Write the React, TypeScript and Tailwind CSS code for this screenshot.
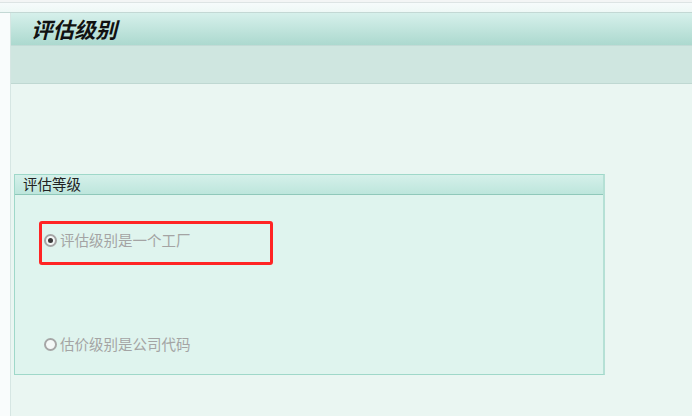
const cjk = { fontFamily: '"Noto Sans CJK SC", "Noto Sans", sans-serif' };

function Radio({ checked, label }: { checked: boolean; label: string }) {
  return (
    <div className="flex items-center h-[20px]">
      <span className="w-[13px] h-[13px] rounded-full border-2 border-[#a6a6a6] bg-[#f4f8f7] flex items-center justify-center">
        {checked && <span className="w-[5px] h-[5px] rounded-full bg-[#3a3a3a]" />}
      </span>
      <span className="ml-[3px] text-[14.5px] text-[#a4a4a4] leading-none">{label}</span>
    </div>
  );
}

export default function App() {
  return (
    <div className="w-[692px] h-[416px] flex flex-col bg-[#f8fbfb] overflow-hidden" style={cjk}>
      {/* top strip */}
      <div className="h-[2px] bg-[#f3f5f5]" />
      <div className="h-[11px] border-t border-[#dde4e4] border-b border-b-[#c3d8d4] bg-gradient-to-b from-[#f6fbfb] to-[#eef8f6]" />

      <div className="flex flex-1">
        <div className="w-[11px] border-r border-[#d6e6e3] bg-[#f9fcfc]" />

        <div className="flex-1 flex flex-col">
          {/* title bar */}
          <div className="h-[33px] flex items-center bg-gradient-to-b from-[#d6f0eb] to-[#acd9cf] border-b border-[#c2dbd6]">
            <h1 className="ml-[20px] text-[21.5px] font-bold italic text-[#111] leading-none">评估级别</h1>
          </div>
          {/* toolbar */}
          <div className="h-[38px] bg-[#cfe6e0] border-b border-[#bfd8d2]" />

          {/* content */}
          <div className="flex-1 bg-[#eaf6f2] pl-[3px] pt-[90px]">
            <div className="relative w-[591px] h-[201px] border border-[#9fd8c9] border-r-2 border-r-[#b5e0d5] bg-[#dff4ee] flex flex-col">
              <div className="h-[20px] flex items-center pl-[8px] bg-gradient-to-b from-[#d5f0ea] to-[#bde6dc] border-b border-[#8fc8ba] text-[14.5px] text-[#222] leading-none">
                评估等级
              </div>
              <div className="pl-[29px] pt-[35px] flex flex-col gap-[84px]">
                <Radio checked label="评估级别是一个工厂" />
                <Radio checked={false} label="估价级别是公司代码" />
              </div>
              <div className="absolute left-[24px] top-[46px] w-[234px] h-[44px] border-[3px] border-[#ff2424] rounded-[3px]" />
            </div>
          </div>
        </div>
      </div>
    </div>
  );
}
